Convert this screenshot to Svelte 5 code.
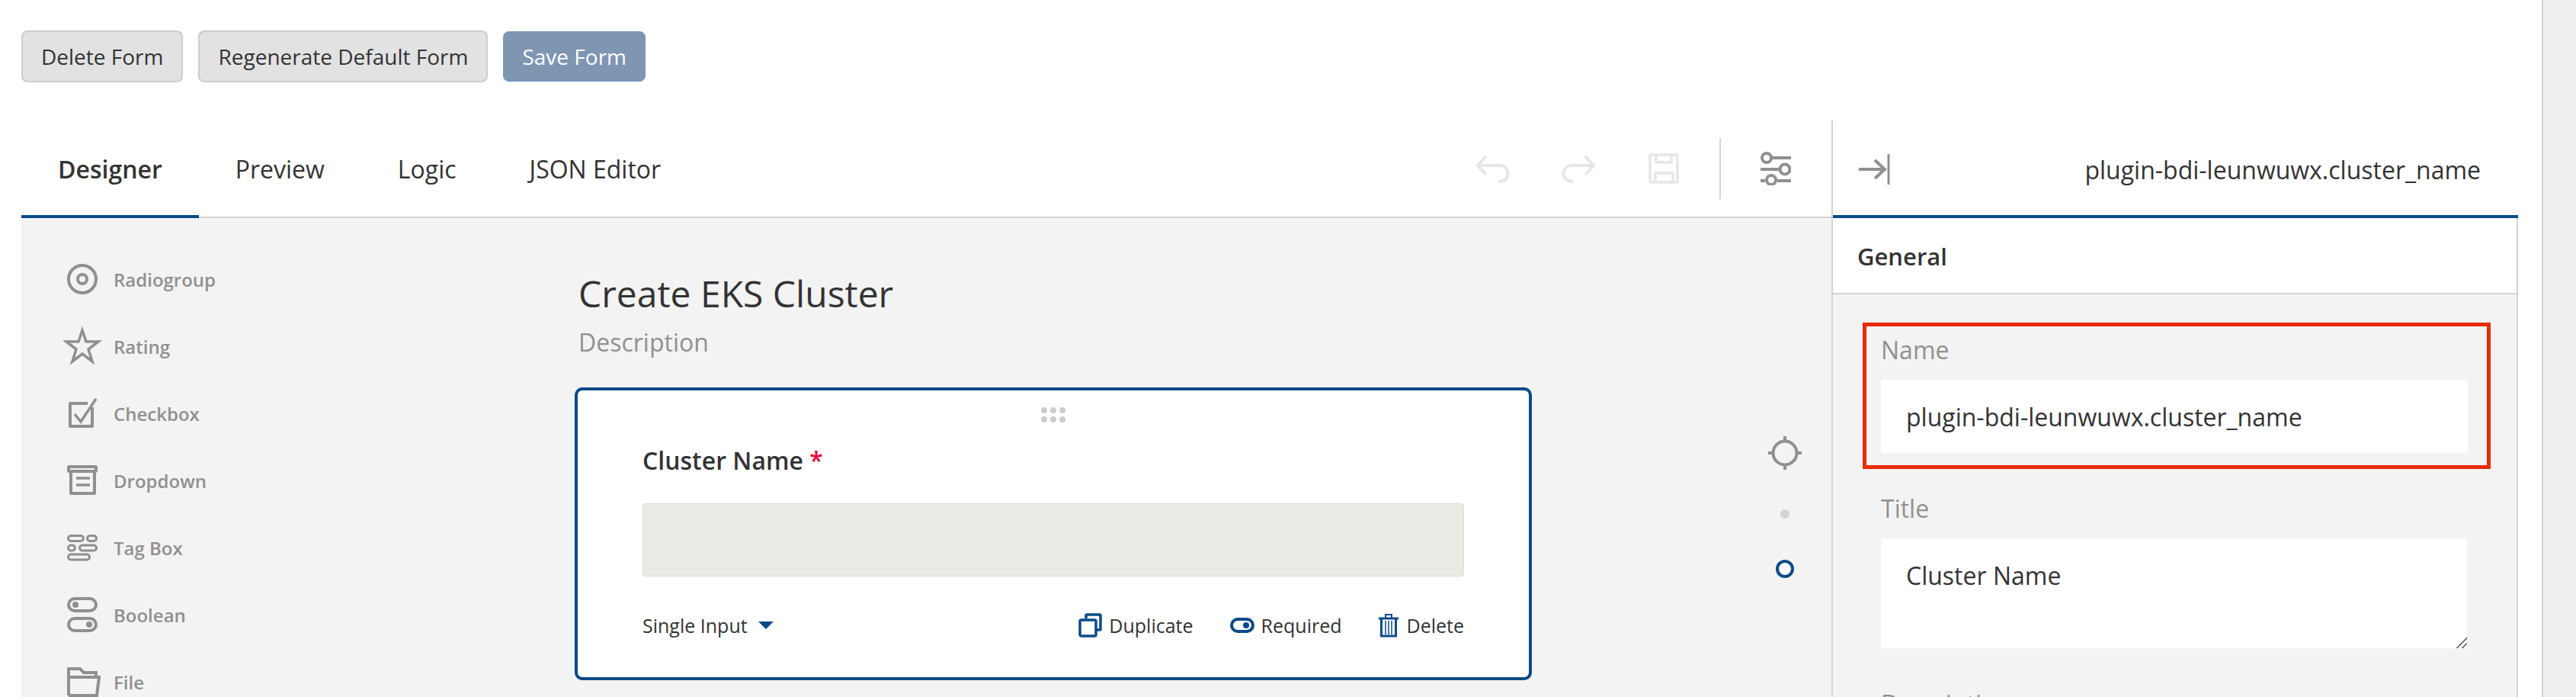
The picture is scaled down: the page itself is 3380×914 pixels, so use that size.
<script>
	const tabs = ['Designer', 'Preview', 'Logic', 'JSON Editor'];
	const tools = ['Radiogroup', 'Rating', 'Checkbox', 'Dropdown', 'Tag Box', 'Boolean', 'File'];
</script>

<div class="page">
	<div class="main">
		<div class="actions">
			<button class="btn">Delete Form</button>
			<button class="btn">Regenerate Default Form</button>
			<button class="btn primary">Save Form</button>
		</div>

		<div class="editor">
			<div class="left">
				<div class="topbar">
					<div class="tabs">
						{#each tabs as tab, i}
							<div class="tab" class:active={i === 0}>{tab}</div>
						{/each}
					</div>
					<div class="tools">
						<svg class="undo" width="46" height="37" viewBox="0 0 46 37" fill="none" stroke="#e6e6e6" stroke-width="4">
							<path d="M15 2 L4 14 L15 26" />
							<path d="M4 14 H33 A10.5 10.5 0 0 1 33 35 H31" />
						</svg>
						<svg class="redo" width="46" height="37" viewBox="0 0 46 37" fill="none" stroke="#e6e6e6" stroke-width="4">
							<g transform="translate(46 0) scale(-1 1)">
								<path d="M15 2 L4 14 L15 26" />
								<path d="M4 14 H33 A10.5 10.5 0 0 1 33 35 H31" />
							</g>
						</svg>
						<svg class="floppy" width="40" height="40" viewBox="0 0 40 40" fill="none" stroke="#e6e6e6" stroke-width="3.5">
							<rect x="2" y="2" width="36" height="36" rx="2" />
							<path d="M10 2 V12 H30 V2" />
							<path d="M9 38 V26 H32 V38" />
						</svg>
						<div class="divider"></div>
						<svg class="sliders" width="40" height="44" viewBox="0 0 40 44" fill="none" stroke="#909090" stroke-width="4">
							<path d="M14 8 H40 M0 23 H24 M0 38 H6 M22 38 H40" />
							<circle cx="8" cy="8" r="6" />
							<circle cx="32" cy="23" r="6.5" />
							<circle cx="14" cy="37" r="6" />
						</svg>
					</div>
				</div>

				<div class="workspace">
					<div class="toolbox">
						{#each tools as tool}
							<div class="tool">
								<svg width="40" height="40" viewBox="0 0 40 40" fill="none" stroke="#909090" stroke-width="4">
									{#if tool === 'Radiogroup'}
										<circle cx="20" cy="20" r="18" />
										<circle cx="20" cy="20" r="6" />
									{:else if tool === 'Rating'}
										<path stroke-width="3.5" d="M20 -1 L25 14 L41 14 L28 24 L33 40 L20 30 L7 40 L12 24 L-1 14 L15 14 Z" />
									{:else if tool === 'Checkbox'}
										<path d="M33 12 V37 H4 V7 H27" stroke-linejoin="round" />
										<path d="M10 21 L18 31 L38 1" stroke-width="3.5" />
									{:else if tool === 'Dropdown'}
										<rect x="2" y="2" width="36" height="6" rx="1" />
										<path d="M5 8 V37 H36 V8" stroke-linejoin="round" />
										<path d="M12 17 H30 M12 26 H30" stroke-width="3.5" />
									{:else if tool === 'Tag Box'}
										<g stroke-width="3">
											<rect x="1.5" y="4.5" width="20" height="7" rx="3.5" />
											<rect x="26.5" y="4.5" width="12" height="7" rx="3.5" />
											<rect x="1.5" y="17" width="9" height="7" rx="3.5" />
											<rect x="16.5" y="17" width="22" height="7" rx="3.5" />
											<rect x="1.5" y="29" width="28" height="7" rx="3.5" />
										</g>
									{:else if tool === 'Boolean'}
										<rect x="2" y="-1" width="36" height="16" rx="8" />
										<rect x="2" y="25" width="36" height="16" rx="8" />
										<circle cx="11" cy="7" r="4" fill="#909090" stroke="none" />
										<circle cx="29" cy="33" r="4" fill="#909090" stroke="none" />
									{:else}
										<path d="M2 38 V3 H17 L22 8 H38 V14 M2 14 H42 L39 38 H2" />
									{/if}
								</svg>
								<span>{tool}</span>
							</div>
						{/each}
					</div>

					<div class="canvas">
						<h1>Create EKS Cluster</h1>
						<p class="desc">Description</p>
						<div class="card">
							<div class="grip">
								{#each Array(6) as _}
									<i></i>
								{/each}
							</div>
							<div class="q-title">Cluster Name <span class="star">*</span></div>
							<div class="q-input"></div>
							<div class="q-foot">
								<div class="q-type">
									Single Input
									<svg width="20" height="10" viewBox="0 0 20 10"><path d="M0 0 H20 L10 10 Z" fill="#0b4a86" /></svg>
								</div>
								<div class="q-acts">
									<div class="act dup">
										<svg width="31" height="32" viewBox="0 0 31 32" fill="none" stroke="#0b4a86" stroke-width="3.5">
											<path d="M10 7 V3 Q10 2 11 2 H28 Q29 2 29 3 V21 Q29 22 28 22 H23" />
											<rect x="2" y="9" width="21" height="21" rx="2" />
										</svg>
										Duplicate
									</div>
									<div class="act req">
										<svg width="32" height="20" viewBox="0 0 32 20" fill="none" stroke="#0b4a86" stroke-width="4">
											<rect x="2" y="2" width="28" height="16" rx="8" />
											<circle cx="21" cy="10" r="4" fill="#0b4a86" stroke="none" />
										</svg>
										Required
									</div>
									<div class="act del">
										<svg width="26" height="32" viewBox="0 0 26 32" fill="none" stroke="#0b4a86">
											<path d="M0 7 H26" stroke-width="3" />
											<path d="M9 6 V2 H17 V6" stroke-width="2" />
											<path d="M3.5 8 V30 H22.5 V8" stroke-width="3" />
											<path d="M9 10 V28 M13 10 V28 M17 10 V28" stroke-width="1.5" />
										</svg>
										Delete
									</div>
								</div>
							</div>
						</div>
					</div>

					<div class="rail">
						<svg width="44" height="44" viewBox="0 0 44 44" fill="none" stroke="#909090" stroke-width="4">
							<circle cx="22" cy="22" r="15.5" />
							<path d="M22 0 V6 M22 38 V44 M0 22 H6 M38 22 H44" />
						</svg>
						<span class="dot"></span>
						<span class="ring"></span>
					</div>
				</div>
			</div>

			<aside class="side">
				<div class="side-head">
					<svg width="41" height="40" viewBox="0 0 41 40" fill="none" stroke="#909090">
						<path d="M0 20 H33 M21 8 L34 20 L21 32" stroke-width="4" />
						<path d="M39 0 V40" stroke-width="3" />
					</svg>
					<span>plugin-bdi-leunwuwx.cluster_name</span>
				</div>
				<div class="section">General</div>
				<div class="props">
					<div class="highlight">
						<label for="prop-name">Name</label>
						<input id="prop-name" type="text" value="plugin-bdi-leunwuwx.cluster_name" />
					</div>
					<div class="field">
						<label for="prop-title">Title</label>
						<textarea id="prop-title">Cluster Name</textarea>
					</div>
					<div class="field next">
						<label for="prop-desc">Description</label>
					</div>
				</div>
			</aside>
		</div>
	</div>
	<div class="gutter"></div>
</div>

<style>
	:global(body) {
		margin: 0;
		background: #fff;
	}
	.page {
		display: flex;
		height: 914px;
		overflow: hidden;
		font-family: 'Open Sans', sans-serif;
		color: #333;
	}
	.main {
		flex: 1;
		min-width: 0;
		padding-left: 28px;
		padding-right: 31px;
	}
	.gutter {
		width: 43px;
		background: #eee;
		border-left: 2px solid #d0d0d0;
	}

	.actions {
		display: flex;
		align-items: center;
		gap: 20px;
		height: 68px;
		padding-top: 40px;
		padding-bottom: 50px;
	}
	.btn {
		height: 68px;
		padding: 0 24px;
		background: #e2e2e2;
		border: 2px solid #ccc;
		border-radius: 8px;
		font: 28px 'Open Sans', sans-serif;
		color: #333;
	}
	.btn.primary {
		height: 66px;
		padding: 0 25px;
		background: #7f96b3;
		border: none;
		border-bottom: 1px solid #6c9ac8;
		color: #fff;
	}

	.editor {
		display: flex;
		height: 756px;
	}
	.left {
		flex: 1;
		min-width: 0;
		display: flex;
		flex-direction: column;
	}
	.topbar {
		display: flex;
		justify-content: space-between;
		height: 126px;
		border-bottom: 2px solid #d4d4d4;
	}
	.tabs {
		display: flex;
	}
	.tab {
		height: 124px;
		padding: 0 48px;
		line-height: 128px;
		font-size: 32px;
	}
	.tab.active {
		height: 124px;
		margin-bottom: -2px;
		border-bottom: 4px solid #0b4a86;
		font-weight: 600;
	}
	.tools {
		display: flex;
		align-items: center;
		padding-right: 53px;
	}
	.undo {
		margin-right: 68px;
	}
	.redo {
		margin-right: 68px;
	}
	.floppy {
		margin-right: 53px;
	}
	.divider {
		width: 2px;
		height: 80px;
		background: #d4d4d4;
		margin-right: 52px;
	}

	.workspace {
		flex: 1;
		display: flex;
		background: #f3f3f3;
	}
	.toolbox {
		width: 666px;
		padding: 36px 0 0 60px;
	}
	.tool {
		display: flex;
		align-items: center;
		gap: 21px;
		height: 88px;
		color: #909090;
		font-size: 24px;
		font-weight: 600;
	}
	.tool svg {
		overflow: visible;
		flex: none;
	}

	.canvas {
		flex: 1;
		min-width: 0;
	}
	h1 {
		margin: 69px 0 0 5px;
		font-size: 48px;
		font-weight: 400;
		line-height: 60px;
	}
	.desc {
		margin: 14px 0 39px 5px;
		font-size: 32px;
		line-height: 40px;
		color: #909090;
	}
	.card {
		box-sizing: border-box;
		height: 384px;
		padding: 26px 85px 0;
		background: #fff;
		border: 4px solid #0b4a86;
		border-radius: 10px;
	}
	.grip {
		display: grid;
		grid-template-columns: repeat(3, 8px);
		justify-content: center;
		gap: 4px;
		height: 20px;
		margin-top: -4px;
	}
	.grip i {
		width: 8px;
		height: 8px;
		border-radius: 50%;
		background: #ccc;
	}
	.q-title {
		margin-top: 30px;
		font-size: 32px;
		font-weight: 600;
		line-height: 40px;
	}
	.star {
		color: #e4003a;
	}
	.q-input {
		box-sizing: border-box;
		height: 96px;
		margin-top: 36px;
		background: #ebeae4;
		border: 1px solid #dddcd6;
		border-radius: 4px;
	}
	.q-foot {
		display: flex;
		justify-content: space-between;
		align-items: center;
		height: 38px;
		margin-top: 45px;
		font-size: 25px;
	}
	.q-type {
		display: flex;
		align-items: center;
		gap: 14px;
	}
	.q-acts {
		display: flex;
		align-items: center;
	}
	.act {
		display: flex;
		align-items: center;
		gap: 9px;
	}
	.dup,
	.req {
		margin-right: 48px;
	}
	.del {
		gap: 11px;
	}

	.rail {
		width: 122px;
		flex: none;
		margin-left: 271px;
		display: flex;
		flex-direction: column;
		align-items: center;
		padding-top: 286px;
		box-sizing: border-box;
	}
	.dot {
		width: 12px;
		height: 12px;
		margin-top: 52px;
		border-radius: 50%;
		background: #d4d4d4;
	}
	.ring {
		box-sizing: border-box;
		width: 24px;
		height: 24px;
		margin-top: 54px;
		border: 4px solid #0b4a86;
		border-radius: 50%;
		background: #fff;
	}

	.side {
		flex: none;
		box-sizing: border-box;
		width: 901px;
		border-left: 2px solid #d4d4d4;
		display: flex;
		flex-direction: column;
	}
	.side-head {
		flex: none;
		display: flex;
		align-items: center;
		justify-content: space-between;
		box-sizing: border-box;
		height: 128px;
		padding: 4px 49px 0 34px;
		border-bottom: 4px solid #0b4a86;
		font-size: 32px;
	}
	.section {
		flex: none;
		box-sizing: border-box;
		height: 100px;
		padding-left: 32px;
		line-height: 100px;
		font-size: 31px;
		font-weight: 600;
		border-right: 2px solid #d4d4d4;
		border-bottom: 2px solid #d4d4d4;
	}
	.props {
		flex: 1;
		background: #f3f3f3;
		border-right: 2px solid #d4d4d4;
		overflow: hidden;
	}
	.highlight {
		box-sizing: border-box;
		width: 824px;
		height: 192px;
		margin: 37px 0 0 39px;
		padding: 13px 25px 0 19px;
		border: 5px solid #e82c00;
	}
	.field {
		padding: 34px 65px 0 63px;
	}
	.field.next {
		padding-top: 55px;
	}
	label {
		display: block;
		height: 36px;
		margin-bottom: 21px;
		line-height: 36px;
		font-size: 32px;
		color: #909090;
	}
	input,
	textarea {
		display: block;
		box-sizing: border-box;
		width: 100%;
		margin: 0;
		padding: 0 33px;
		background: #fff;
		border: none;
		outline: none;
		font: 32px 'Open Sans', sans-serif;
		color: #333;
	}
	input {
		height: 96px;
	}
	textarea {
		height: 144px;
		padding-top: 28px;
		line-height: 42px;
	}
	textarea::-webkit-resizer {
		background: linear-gradient(
			135deg,
			transparent 52%,
			#555 52% 60%,
			transparent 60% 74%,
			#555 74% 82%,
			transparent 82%
		);
	}
</style>
